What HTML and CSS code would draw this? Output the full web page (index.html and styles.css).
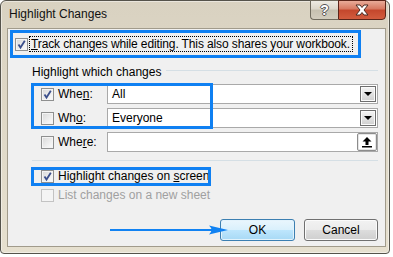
FILE: index.html
```html
<!DOCTYPE html>
<html lang="en">
<head>
    <meta charset="UTF-8">
    <meta name="viewport" content="width=device-width, initial-scale=1.0">
    <title>Highlight Changes</title>

   <!--Estilos del dialogo-->
  <link rel="stylesheet" href="styles.css">
</head>
<body>
    <div class="window">
        <!-- Barra de titulo -->
        <div class="titlebar">
            <span class="title">Highlight Changes</span>
            <div class="caption-buttons">
                <span class="cap-btn help">?</span>
                <span class="cap-btn close">
                    <svg width="18" height="12" viewBox="0 0 18 12">
                        <path d="M3 1 H7 L9 3.5 L11 1 H15 L11 6 L15 11 H11 L9 8.5 L7 11 H3 L7 6 Z" fill="#fff" stroke="#4a2a22" stroke-width="1"/>
                    </svg>
                </span>
            </div>
        </div>

        <div class="client">
            <div class="track-row">
                <span class="checkbox"><svg width="11" height="11" viewBox="0 0 11 11"><path d="M2.5 5.5 L4.5 8.5 L8.8 1.8" fill="none" stroke="#3b4f8c" stroke-width="1.8"/></svg></span>
                <span class="focus-label"><u>T</u>rack changes while editing. This also shares your workbook.</span>
            </div>

            <!-- Grupo de opciones -->
            <div class="group">
                <div class="group-title"><span>Highlight which changes</span><span class="rule"></span></div>

                <div class="field-row">
                    <span class="checkbox"><svg width="11" height="11" viewBox="0 0 11 11"><path d="M2.5 5.5 L4.5 8.5 L8.8 1.8" fill="none" stroke="#3b4f8c" stroke-width="1.8"/></svg></span>
                    <span class="field-label">Whe<u>n</u>:</span>
                    <div class="field"><span class="field-value">All</span><span class="drop-btn"></span></div>
                </div>
                <div class="field-row">
                    <span class="checkbox"></span>
                    <span class="field-label">Wh<u>o</u>:</span>
                    <div class="field"><span class="field-value">Everyone</span><span class="drop-btn"></span></div>
                </div>
                <div class="field-row">
                    <span class="checkbox"></span>
                    <span class="field-label">Whe<u>r</u>e:</span>
                    <div class="field">
                        <span class="field-value"></span>
                        <span class="upload-btn">
                            <svg width="12" height="12" viewBox="0 0 12 12">
                                <path d="M6 1 L10.5 5.5 H7.5 V9 H4.5 V5.5 H1.5 Z" fill="#000"/>
                                <rect x="1" y="10" width="10" height="1.5" fill="#000"/>
                            </svg>
                        </span>
                    </div>
                </div>

                <div class="separator"></div>

                <div class="check-row">
                    <span class="checkbox"><svg width="11" height="11" viewBox="0 0 11 11"><path d="M2.5 5.5 L4.5 8.5 L8.8 1.8" fill="none" stroke="#3b4f8c" stroke-width="1.8"/></svg></span>
                    <span class="check-label">Highlight changes on <u>s</u>creen</span>
                </div>
                <div class="check-row disabled">
                    <span class="checkbox"></span>
                    <span class="check-label">List changes on a new sheet</span>
                </div>
            </div>

            <div class="buttons">
                <span class="btn btn-default">OK</span>
                <span class="btn">Cancel</span>
            </div>

            <!-- Marcas de anotacion -->
            <span class="mark mark-track"></span>
            <span class="mark mark-when"></span>
            <span class="mark mark-screen"></span>
            <svg class="arrow" width="118" height="12" viewBox="0 0 118 12">
                <path d="M0 6 H106" stroke="#1182f2" stroke-width="2"/>
                <path d="M118 6 L99 1.5 Q104 6 99 10.5 Z" fill="#1182f2"/>
            </svg>
        </div>
    </div>
</body>
</html>
```

FILE: styles.css
```css
body {
    padding: 0;
    margin: 0;
    background-color: #fff;
    font-family: "Liberation Sans", Arial, sans-serif;
    font-size: 12px;
    color: #000;
  }
  /*Marco de la ventana*/
  .window {
    width: 390px;
    height: 254px;
    box-sizing: border-box;
    border: 1px solid #55534b;
    border-radius: 6px 6px 4px 4px;
    background: linear-gradient(to bottom, #d9d2c1, #e6e0cf);
    box-shadow: inset 0 0 0 1px rgba(255, 255, 255, 0.45);
    padding: 0 3px 6px 6px;
    display: flex;
    flex-direction: column;
  }
  .titlebar {
    height: 27px;
    display: flex;
    justify-content: space-between;
    align-items: flex-start;
  }
  .title {
    margin: 6px 0 0 2px;
    line-height: 15px;
    color: #111;
  }
  .caption-buttons {
    display: flex;
    margin-top: -1px;
  }
  .cap-btn {
    height: 20px;
    box-sizing: border-box;
    display: flex;
    align-items: center;
    justify-content: center;
  }
  .help {
    width: 28px;
    border: 1px solid #6f6a5d;
    border-right: none;
    border-radius: 0 0 0 4px;
    background: linear-gradient(to bottom, #eeebe3, #dcd7ca 45%, #c6c0b0 50%, #d2ccbd);
    color: #fff;
    font-weight: bold;
    font-size: 14px;
    text-shadow: 1px 0 0 #555, -1px 0 0 #555, 0 1px 0 #555, 0 -1px 0 #555;
  }
  .close {
    width: 48px;
    border: 1px solid #5b2419;
    border-radius: 0 0 4px 0;
    background: linear-gradient(to bottom, #e9ab99, #d6775f 45%, #c4462c 50%, #d25c3e);
  }
  /*Area del dialogo*/
  .client {
    flex: 1;
    border: 1px solid #a19b8b;
    background-color: #f0f0f0;
    position: relative;
    display: flex;
    flex-direction: column;
  }
  .checkbox {
    width: 13px;
    height: 13px;
    box-sizing: border-box;
    border: 1px solid #8e8f8f;
    background: linear-gradient(135deg, #d8d8d8, #f6f6f6 80%);
    box-shadow: inset 0 0 0 1px #f4f4f4;
    display: flex;
    align-items: center;
    justify-content: center;
    flex-shrink: 0;
  }
  .track-row {
    display: flex;
    align-items: center;
    height: 16px;
    margin-top: 7px;
    padding-left: 7px;
  }
  .focus-label {
    margin-left: 1px;
    border: 1px dotted #000;
    padding: 0 2px 0 1px;
    line-height: 14px;
    letter-spacing: -0.12px;
  }
  .group {
    margin-top: 12px;
    padding: 0 7px 0 24px;
  }
  .group-title {
    display: flex;
    align-items: flex-start;
    height: 16px;
    line-height: 16px;
  }
  .rule {
    flex: 1;
    height: 1px;
    margin: 6px 0 0 5px;
    background-color: #d5dfe5;
  }
  .field-row {
    display: flex;
    align-items: center;
    height: 20px;
    margin-top: 4px;
    padding-left: 9px;
  }
  .field-label {
    margin-left: 4px;
    width: 49px;
    flex-shrink: 0;
  }
  .field {
    flex: 1;
    height: 20px;
    box-sizing: border-box;
    border: 1px solid #a9a9a9;
    background-color: #fff;
    display: flex;
    align-items: center;
    padding: 1px;
  }
  .field-value {
    flex: 1;
    padding-left: 3px;
  }
  .drop-btn {
    width: 16px;
    height: 16px;
    box-sizing: border-box;
    border: 1px solid #6e6e6e;
    background: linear-gradient(to bottom, #f4f4f4, #e2e2e2 50%, #cfcfcf);
    box-shadow: inset 0 0 0 1px #fafafa;
    display: flex;
    align-items: center;
    justify-content: center;
  }
  .drop-btn::after {
    content: "";
    border-left: 4px solid transparent;
    border-right: 4px solid transparent;
    border-top: 4px solid #000;
    margin-top: -1px;
  }
  .upload-btn {
    width: 20px;
    height: 18px;
    box-sizing: border-box;
    margin: -1px -1px -1px 0;
    border: 1px solid #8c8c8c;
    border-radius: 2px;
    background-color: #fff;
    box-shadow: inset 0 0 0 1px #e6e6e6;
    display: flex;
    align-items: center;
    justify-content: center;
  }
  .separator {
    height: 1px;
    margin-top: 8px;
    background-color: #d5dfe5;
  }
  .check-row {
    display: flex;
    align-items: center;
    height: 16px;
    margin-top: 7px;
    padding-left: 9px;
  }
  .check-row + .check-row {
    margin-top: 3px;
  }
  .check-label {
    margin-left: 4px;
  }
  .disabled {
    color: #a0a0a0;
  }
  .disabled .checkbox {
    border-color: #c3c3c3;
    background: #f4f4f4;
  }
  /*Botones*/
  .buttons {
    display: flex;
    justify-content: flex-end;
    gap: 9px;
    margin-top: 16px;
    padding-right: 7px;
  }
  .btn {
    width: 75px;
    height: 22px;
    box-sizing: border-box;
    border: 1px solid #707070;
    border-radius: 3px;
    background: linear-gradient(to bottom, #f2f2f2, #ebebeb 50%, #dddddd 50%, #cfcfcf);
    box-shadow: inset 0 0 0 1px #fbfbfb;
    display: flex;
    align-items: center;
    justify-content: center;
  }
  .btn + .btn {
    width: 74px;
  }
  .btn-default {
    border-color: #3c7fb1;
    background: linear-gradient(to bottom, #eaf6fd, #d9f0fc 50%, #bee6fd 50%, #a7d9f5);
    box-shadow: inset 0 0 0 1px #e3f3fc;
  }
  /*Marcas azules*/
  .mark {
    position: absolute;
    box-sizing: border-box;
    border: 3px solid #0f80f2;
  }
  .mark-track {
    left: 2px;
    top: 1px;
    width: 351px;
    height: 28px;
  }
  .mark-when {
    left: 23px;
    top: 54px;
    width: 182px;
    height: 46px;
  }
  .mark-screen {
    left: 23px;
    top: 138px;
    width: 180px;
    height: 19px;
  }
  .arrow {
    position: absolute;
    left: 102px;
    top: 195px;
  }
```
